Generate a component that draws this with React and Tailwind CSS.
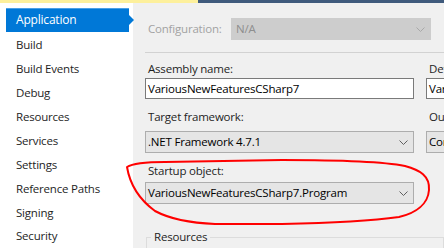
import React from "react";

const font = { fontFamily: '"Open Sans", "Noto Sans", Arial, sans-serif' };

function Chevron({ color = "#606060" }) {
  return (
    <svg width="9" height="5" viewBox="0 0 9 5" className="shrink-0">
      <path d="M0.5 0.5 L4.5 4.5 L8.5 0.5" fill="none" stroke={color} strokeWidth="1" />
    </svg>
  );
}

const items = [
  "Build",
  "Build Events",
  "Debug",
  "Resources",
  "Services",
  "Settings",
  "Reference Paths",
  "Signing",
  "Security",
];

export default function App() {
  return (
    <div
      className="relative w-[444px] h-[248px] overflow-hidden flex flex-col bg-[#f0f0f0] text-[11.5px] tracking-[-0.2px] text-[#1e1e1e]"
      style={font}
    >
      <div className="flex h-[3px] shrink-0">
        <div className="w-[198px] bg-[#fdf09c]" />
        <div className="flex-1 bg-[#3f5a7c]" />
      </div>
      <div className="flex flex-1 min-h-0">
        {/* Sidebar */}
        <div className="w-[133px] shrink-0 bg-white pt-[5px] flex flex-col">
          <div className="relative ml-[6px] mb-[1px] w-[123px] h-[24px] bg-[#0078d7] border-t border-[#4aa0e6] text-white text-[12px] flex items-center pl-[10px]">
            Application
            <div className="absolute right-[-5px] top-[6px] w-0 h-0 border-y-[5px] border-y-transparent border-l-[5px] border-l-[#0078d7]" />
          </div>
          {items.map((t) => (
            <div key={t} className="h-[24px] flex items-center pl-[16px]">
              {t}
            </div>
          ))}
        </div>
        {/* Content */}
        <div className="flex-1 min-w-0 pl-[12px] pt-[15px] flex flex-col">
          <div className="flex items-center h-[22px]">
            <div className="w-[86px] pl-[3px] text-[#a2a2a2]">Configuration:</div>
            <div className="w-[200px] h-[22px] bg-[#cdcdcd] flex items-center justify-between pl-[5px] pr-[6px] text-[#8e8e8e]">
              <span>N/A</span>
              <Chevron color="#a8a8a8" />
            </div>
          </div>
          <div className="mt-[12px] h-px bg-[#d2d2d2] shrink-0" />
          <div className="flex gap-[12px]">
            <div className="w-[269px] shrink-0 flex flex-col">
              <div className="mt-[8px] h-[16px] leading-[16px] pl-[3px]">Assembly name:</div>
              <div className="mt-[1px] h-[21px] bg-white border border-[#7a7a7a] flex items-center pl-[2px] text-black">
                VariousNewFeaturesCSharp7
              </div>
              <div className="mt-[10px] h-[16px] leading-[16px] pl-[3px]">Target framework:</div>
              <div className="mt-[6px] h-[22px] bg-[#e5e5e5] border border-[#adadad] flex items-center justify-between pl-[2px] pr-[5px] text-black">
                <span>.NET Framework 4.7.1</span>
                <Chevron />
              </div>
              <div className="mt-[10px] h-[16px] leading-[16px] pl-[3px]">Startup object:</div>
              <div className="mt-[3px] h-[22px] bg-[#e5e5e5] border border-[#adadad] flex items-center justify-between pl-[2px] pr-[5px] text-black whitespace-nowrap">
                <span>VariousNewFeaturesCSharp7.Program</span>
                <Chevron />
              </div>
            </div>
            <div className="w-[200px] shrink-0 flex flex-col whitespace-nowrap">
              <div className="mt-[8px] h-[16px] leading-[16px] pl-[3px]">Default namespace:</div>
              <div className="mt-[1px] h-[21px] bg-white border border-[#7a7a7a] flex items-center pl-[2px] text-black">
                VariousNewFeaturesCSharp7
              </div>
              <div className="mt-[10px] h-[16px] leading-[16px] pl-[3px]">Output type:</div>
              <div className="mt-[6px] h-[22px] bg-[#e5e5e5] border border-[#adadad] flex items-center pl-[2px] text-black">
                Console Application
              </div>
            </div>
          </div>
          <fieldset className="mt-[25px] ml-[1px] h-[60px] border border-[#dcdcdc] shrink-0">
            <legend className="ml-[4px] px-[3px] leading-[16px]">Resources</legend>
          </fieldset>
        </div>
      </div>
      <svg className="absolute inset-0 pointer-events-none" width="444" height="248" viewBox="0 0 444 248">
        <path
          d="M127,167 C133,163 145,162 165,162 L282,160 C330,160 380,161 405,166 C420,170 430,176 429,190 C428,204 416,213 399,217 C370,221 330,223 282,224 L215,224 C190,223 170,219 155,211 C140,200 130,185 127,167 Z"
          fill="none"
          stroke="#ff0000"
          strokeWidth="2"
          strokeLinejoin="round"
        />
      </svg>
    </div>
  );
}
